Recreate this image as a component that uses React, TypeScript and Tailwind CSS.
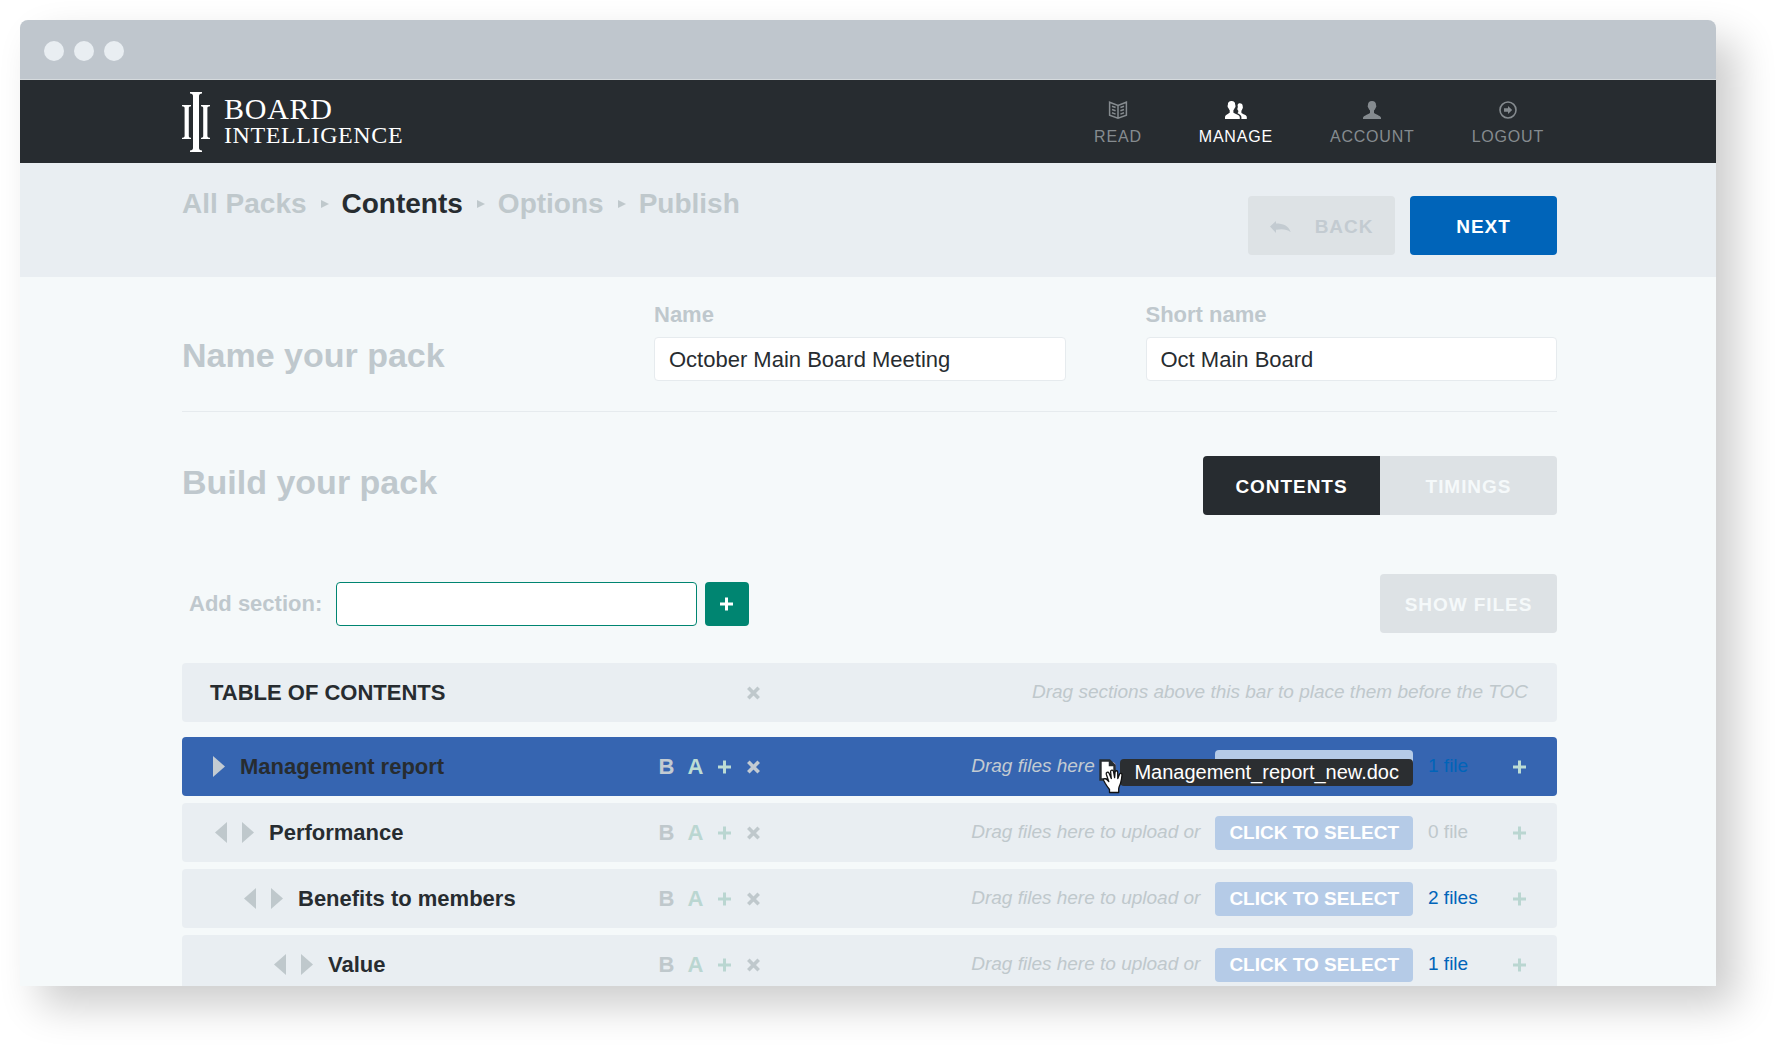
import { useState } from "react"
import clsx from "clsx"

type Section = {
  title: string
  indent: string
  canOutdent: boolean
  files: number
  dragging?: boolean
}

const sections: Section[] = [
  { title: "Management report", indent: "pl-[31px]", canOutdent: false, files: 1, dragging: true },
  { title: "Performance", indent: "pl-[33px]", canOutdent: true, files: 0 },
  { title: "Benefits to members", indent: "pl-[62px]", canOutdent: true, files: 2 },
  { title: "Value", indent: "pl-[92px]", canOutdent: true, files: 1 },
]

const crumbs = ["All Packs", "Contents", "Options", "Publish"]

const Plus = () => (
  <svg width="14" height="14" viewBox="0 0 14 14" stroke="currentColor" strokeWidth="3">
    <path d="M6.500 0.500v13M0 7h13" />
  </svg>
)

const Cross = () => (
  <svg width="14" height="14" viewBox="0 0 14 14" stroke="currentColor" strokeWidth="3.600">
    <path d="M1.300 1.800l10.400 10.400M11.700 1.800L1.300 12.200" />
  </svg>
)

const Triangle = ({ left = false }: { left?: boolean }) => (
  <svg width="12" height="21" viewBox="0 0 12 21" fill="currentColor">
    <path d={left ? "M12 0v21L0 10.5z" : "M0 0v21l12-10.5z"} />
  </svg>
)

const BookIcon = () => (
  <svg width="20" height="18" viewBox="0 0 20 18" fill="none" stroke="currentColor" strokeWidth="1.500">
    <path d="M1.600 1.200L10 4.400l8.400-3.200v13L10 17.200l-8.400-3z M10 4.400v12.800" />
    <path d="M4 5.200l3.600 1.300M4 8.500l3.600 1.300M4 11.800l3.600 1.300M16 5.200l-3.600 1.300M16 8.500l-3.600 1.300M16 11.800l-3.600 1.300" />
  </svg>
)

const PersonIcon = () => (
  <svg width="18" height="18" viewBox="0 0 18 18" fill="currentColor">
    <path d="M9 0c2.600 0 4 1.400 4 3.800 0 .6.400.8.300 1.700-.1.800-.6 1-.8 1.700-.3 1-.9 1.800-1.500 2.400v2.200c.4 1.500 6.200 2.500 7 4.900V18H0v-1.300c.8-2.400 6.600-3.400 7-4.900V9.600C6.400 9 5.800 8.200 5.500 7.200c-.2-.7-.7-.9-.8-1.700C4.600 4.600 5 4.400 5 3.800 5 1.400 6.400 0 9 0z" />
  </svg>
)

const PeopleIcon = () => (
  <svg width="22" height="18" viewBox="0 0 22 18" fill="currentColor">
    <path d="M6.500 0C9.100 0 10.200 1.400 10.200 3.600c0 .7.400.9.300 1.800-.1.800-.5 1-.8 1.700-.3.900-.7 1.700-1.300 2.200v2.300c.4 1.200 5.800 1.900 6.400 4.400V18H0v-2c.6-2.500 4.200-3.200 4.700-4.400V9.300C4.100 8.800 3.700 8 3.400 7.100c-.3-.7-.7-.9-.8-1.700-.1-.9.300-1.100.3-1.800C2.900 1.400 4 0 6.500 0z" />
    <path d="M14.700 2.300c2 0 3 1.100 3 2.900 0 .6.300.8.200 1.500-.1.600-.5.900-.6 1.400-.2.800-.5 1.300-.9 1.700v1.900c.4 1.300 4.900 1.700 5.400 4V18h-5.400v-2.200c-.4-1.700-2.500-2.900-4.100-3.700 1-.5 1-.9 1-2.300-.5-.4-.8-1-1-1.800.2-.7.500-1.300.5-2.500 0-.7-.3-1-.2-1.500.4-1.100 1-1.700 2.100-1.700z" />
  </svg>
)

const LogoutIcon = () => (
  <svg width="18" height="18" viewBox="0 0 18 18" fill="none">
    <circle cx="9" cy="9" r="8" stroke="currentColor" strokeWidth="1.600" />
    <path d="M5 7.300h4V5l4.200 4L9 13v-2.300H5z" fill="currentColor" />
  </svg>
)

const BackIcon = () => (
  <svg width="21" height="12" viewBox="0 0 21 12" fill="currentColor">
    <path d="M0 5.600L6 0v2.400c7 0 12.500 2 14.800 8.800C16.500 8 12 7.800 6 8.800V12z" />
  </svg>
)

const LogoMark = () => (
  <svg width="28" height="60" viewBox="0 0 28 60" fill="#fff">
    <path d="M8 0h12v1.500c-2 .2-3 .8-3 2.500v52c0 1.700 1 2.300 3 2.500V60H8v-1.500c2-.2 3-.8 3-2.500V4c0-1.700-1-2.300-3-2.500z" />
    <path d="M0 13h9v1.200c-1.500.1-2.200.5-2.200 1.800v28c0 1.300.7 1.700 2.200 1.800V47H0v-1.200c1.600-.1 2.600-.5 2.600-1.800V16c0-1.300-1-1.700-2.600-1.800z" />
    <path d="M19 13h9v1.200c-1.600.1-2.600.5-2.600 1.800v28c0 1.300 1 1.700 2.600 1.800V47h-9v-1.200c1.500-.1 2.200-.5 2.200-1.800V16c0-1.300-.7-1.700-2.200-1.800z" />
  </svg>
)

const DragCursor = () => (
  <svg width="27" height="35" viewBox="0 0 27 35" className="relative z-10 -mr-[6px] shrink-0">
    <path d="M1.500 1.500h9l5 5v14h-14z" fill="#fff" stroke="#272c30" strokeWidth="2.400" />
    <path d="M10.500 1.500v5h5" fill="#272c30" stroke="#272c30" strokeWidth="1.500" />
    <path
      d="M10.500 33.500v-3c-1.500-2-3-4-4.300-6.300-.8-1.500-2.200-3.200-1.500-4 .9-1 2.300-.4 3.300.6l1.800 1.800-2.500-7.300c-.6-1.900 1.700-3 2.700-1.200l2.300 5.400-.7-6.700c-.1-2 2.400-2.300 2.900-.4l1.100 6.200.5-5.700c.3-1.700 2.500-1.500 2.600.3l.1 6.400 1.700-4.400c.7-1.400 2.600-.8 2.500.8-.2 3-.7 5.300-1.400 8-.5 2-1.700 3.500-1.900 5.700v3.800z"
      fill="#fff"
      stroke="#111"
      strokeWidth="1.300"
      strokeLinejoin="round"
    />
  </svg>
)

const navItems = [
  { label: "READ", icon: <BookIcon /> },
  { label: "MANAGE", icon: <PeopleIcon />, active: true },
  { label: "ACCOUNT", icon: <PersonIcon /> },
  { label: "LOGOUT", icon: <LogoutIcon /> },
]

const Field = ({ id, label, value }: { id: string; label: string; value: string }) => (
  <div className="flex min-w-0 flex-1 flex-col gap-2">
    <label htmlFor={id} className="text-[22px] leading-7 font-bold text-[#bfc8cd]">
      {label}
    </label>
    <input
      id={id}
      type="text"
      defaultValue={value}
      className="h-11 w-full rounded-[4px] border border-[#e6ebee] bg-white px-[14px] pt-[2px] text-[22px] text-[#272c30]"
    />
  </div>
)

const SectionRow = ({ title, indent, canOutdent, files, dragging }: Section) => {
  const grey = dragging ? "text-[#c3cbd2]" : "text-[#bfc8cc]"
  const green = dragging ? "text-[#bcdcd4]" : "text-[#bad6d1]"
  const cell = "flex w-[29px] items-center justify-center text-[22px] font-bold"

  return (
    <li
      className={clsx(
        "flex h-[59px] items-center rounded-[4px] pr-[23px]",
        dragging ? "bg-[#3665b1]" : "bg-[#e9eef2]"
      )}
    >
      <div className={clsx("flex w-[470px] shrink-0 items-center gap-[15px]", indent)}>
        {canOutdent && (
          <button aria-label="Outdent" className={grey}>
            <Triangle left />
          </button>
        )}
        <button aria-label="Indent" className={grey}>
          <Triangle />
        </button>
        <h3 className="text-[22px] leading-7 font-bold">{title}</h3>
      </div>
      <button className={clsx(cell, grey)}>B</button>
      <button className={clsx(cell, green)}>A</button>
      <button aria-label="Add subsection" className={clsx(cell, green)}>
        <Plus />
      </button>
      <button aria-label="Delete section" className={clsx(cell, grey)}>
        <Cross />
      </button>

      <div className="relative ml-auto flex items-center gap-[15px]">
        <p className={clsx("text-[19px] whitespace-nowrap italic", grey)}>Drag files here to upload or</p>
        <button className="h-[34px] rounded-[4px] bg-[#b5cbe7] px-[14px] pt-[2px] text-[19px] font-bold whitespace-nowrap text-white">
          CLICK TO SELECT
        </button>
        {dragging && (
          <div className="absolute top-[9px] right-0 flex items-start">
            <DragCursor />
            <span className="rounded-[4px] bg-[#2b2e31] px-[14px] text-[20px] leading-[27px] text-white">
              Management_report_new.doc
            </span>
          </div>
        )}
      </div>
      <a
        href="#files"
        className={clsx(
          "ml-[15px] w-[77px] text-[19px] whitespace-nowrap",
          files > 0 ? "text-[#0064b9]" : "text-[#bfc8cc]"
        )}
      >
        {files} {files > 1 ? "files" : "file"}
      </a>
      <button aria-label="Add file" className={clsx(cell, green)}>
        <Plus />
      </button>
    </li>
  )
}

const App = () => {
  const [tab, setTab] = useState("CONTENTS")

  return (
    <div className="h-screen bg-white pt-5 pr-15 pb-15 pl-5 font-['Liberation_Sans',Arial,sans-serif] text-[#272c30]">
      <div className="h-full overflow-hidden rounded-t-lg bg-[#f5f9fa] shadow-[20px_20px_40px_rgba(0,0,0,0.2)]">
        <div className="flex h-15 items-center gap-[10px] border-b border-[#d5dadd] bg-[#bfc6cd] pt-[2px] pl-6">
          <span className="size-5 rounded-full bg-[#e9eef2]" />
          <span className="size-5 rounded-full bg-[#e9eef2]" />
          <span className="size-5 rounded-full bg-[#e9eef2]" />
        </div>

        <header className="flex h-[83px] items-start justify-between bg-[#272c30] pr-[172px] pl-[162px]">
          <a href="#home" className="flex items-start gap-[14px] pt-3 text-white">
            <LogoMark />
            <span className="flex flex-col pt-1 font-['Liberation_Serif',serif] leading-[26px]">
              <span className="text-[30px] tracking-wide">BOARD</span>
              <span className="text-[24px] tracking-wide">INTELLIGENCE</span>
            </span>
          </a>
          <nav className="flex gap-[57px] pt-[21px]">
            {navItems.map(({ label, icon, active }) => (
              <a
                key={label}
                href={`#${label.toLowerCase()}`}
                className={clsx(
                  "flex flex-col items-center gap-2 text-[16px] leading-5 tracking-wider",
                  active ? "text-white" : "text-[#858b8f]"
                )}
              >
                {icon}
                {label}
              </a>
            ))}
          </nav>
        </header>

        <div className="flex items-start justify-between bg-[#e9eef2] pt-[25px] pr-[159px] pb-[22px] pl-[162px]">
          <ol className="flex items-center gap-[14px] text-[28px] leading-8 font-bold text-[#bfc8cc]">
            {crumbs.map((crumb, i) => (
              <li key={crumb} className="flex items-center gap-[13px]">
                {i > 0 && (
                  <svg width="8" height="8" viewBox="0 0 8 8" fill="currentColor">
                    <path d="M0 0v8l8-4z" />
                  </svg>
                )}
                <a href="#step" className={clsx(crumb === "Contents" && "text-[#272c30]")}>
                  {crumb}
                </a>
              </li>
            ))}
          </ol>
          <div className="mt-2 flex gap-[15px] text-[19px] font-bold tracking-wider">
            <button className="flex h-[59px] w-[147px] items-center justify-center gap-6 rounded-[4px] bg-[#dde2e5] pt-[3px] text-[#c3cbd1]">
              <BackIcon />
              BACK
            </button>
            <button className="h-[59px] w-[147px] rounded-[4px] bg-[#0064b9] pt-[3px] text-white">NEXT</button>
          </div>
        </div>

        <main className="pr-[159px] pl-[162px]">
          <section className="flex items-end border-b border-[#e6ebee] pt-6 pb-[30px]">
            <h2 className="w-[472px] shrink-0 pb-[6px] text-[34px] leading-10 font-bold text-[#bfc8cd]">
              Name your pack
            </h2>
            <div className="flex flex-1 gap-20">
              <Field id="name" label="Name" value="October Main Board Meeting" />
              <Field id="short-name" label="Short name" value="Oct Main Board" />
            </div>
          </section>

          <section className="flex items-start justify-between pt-11">
            <h2 className="pt-[6px] text-[34px] leading-10 font-bold text-[#bfc8cd]">Build your pack</h2>
            <div className="flex overflow-hidden rounded-[4px]">
              {["CONTENTS", "TIMINGS"].map((name) => (
                <button
                  key={name}
                  onClick={() => setTab(name)}
                  className={clsx(
                    "h-[59px] w-[177px] pt-[3px] text-[19px] font-bold tracking-wider",
                    tab === name ? "bg-[#272c30] text-white" : "bg-[#dde2e5] text-[#f5f9fa]"
                  )}
                >
                  {name}
                </button>
              ))}
            </div>
          </section>

          <div className="mt-[59px] flex items-center justify-between">
            <form className="flex items-center pl-[7px]">
              <label htmlFor="section" className="mr-[14px] text-[22px] font-bold text-[#bfc8cd]">
                Add section:
              </label>
              <input
                id="section"
                type="text"
                className="mr-2 h-11 w-[361px] rounded-[4px] border border-[#008571] bg-white px-3 text-[22px]"
              />
              <button
                type="button"
                aria-label="Add section"
                className="flex size-11 items-center justify-center rounded-[4px] bg-[#008571] text-white"
              >
                <Plus />
              </button>
            </form>
            <button className="h-[59px] w-[177px] rounded-[4px] bg-[#dde2e5] pt-[3px] text-[19px] font-bold tracking-wider text-[#f5f9fa]">
              SHOW FILES
            </button>
          </div>

          <div className="mt-[30px] flex h-[59px] items-center rounded-[4px] bg-[#e9eef2] pr-[29px]">
            <h3 className="w-[557px] pl-[28px] text-[22px] font-bold">TABLE OF CONTENTS</h3>
            <button aria-label="Remove table of contents" className="flex w-[29px] justify-center text-[#bfc8cc]">
              <Cross />
            </button>
            <p className="ml-auto text-[19px] whitespace-nowrap text-[#bfc8cc] italic">
              Drag sections above this bar to place them before the TOC
            </p>
          </div>

          <ul className="mt-[15px] flex flex-col gap-[7px]">
            {sections.map((section) => (
              <SectionRow key={section.title} {...section} />
            ))}
          </ul>
        </main>
      </div>
    </div>
  )
}

export default App
